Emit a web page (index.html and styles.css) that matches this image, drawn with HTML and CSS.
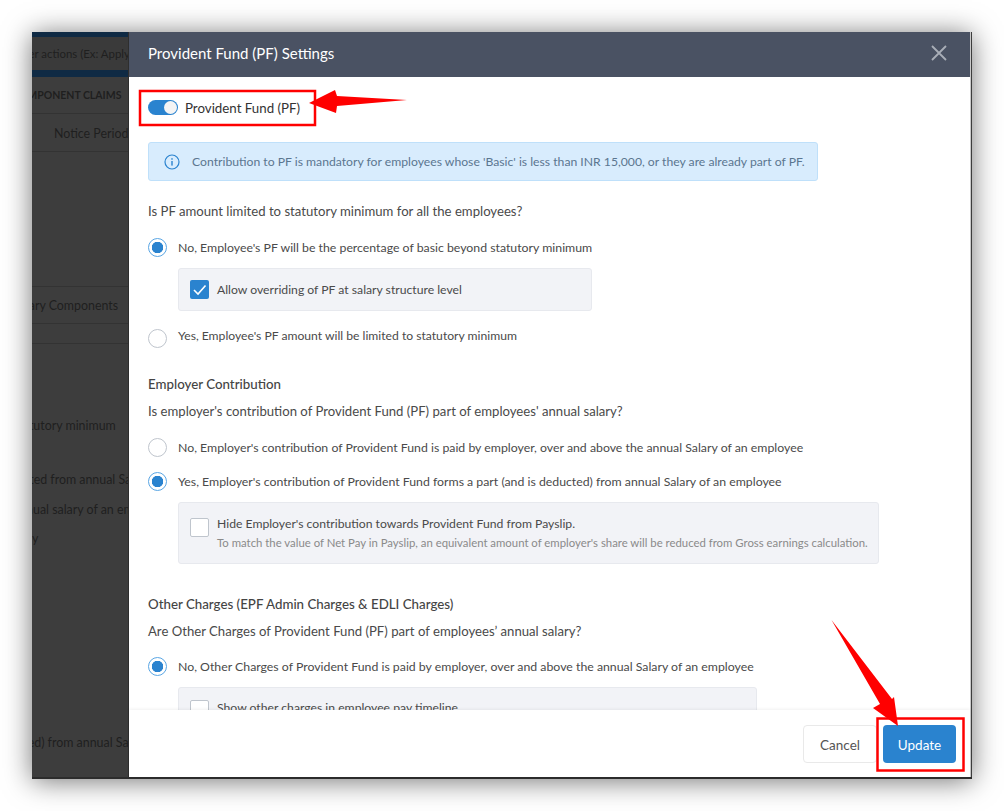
FILE: index.html
```html
<!DOCTYPE html>
<html lang="en">
<head>
    <meta charset="UTF-8">
    <title>Provident Fund (PF) Settings</title>
    <link rel="stylesheet" href="styles.css">
</head>
<body>

<div class="window">
    <div class="backdrop">
        <div class="back-top"><span class="cut-actions">Other actions (Ex: Apply</span></div>
        <div class="back-tab"><span>COMPONENT CLAIMS</span></div>
        <div class="back-notice"><span>Notice Period</span></div>
        <div class="back-line line-a"></div>
        <div class="back-comp"><span>Salary Components</span></div>
        <div class="back-line line-b"></div>
        <p class="back-text t1"><span>statutory minimum</span></p>
        <p class="back-text t2"><span>deducted from annual Salary</span></p>
        <p class="back-text t3"><span>annual salary of an employee</span></p>
        <p class="back-text t4"><span>y</span></p>
        <p class="back-text t5"><span>deducted) from annual Salary</span></p>
    </div>

    <div class="modal">
        <div class="modal-head">
            <h1>Provident Fund (PF) Settings</h1>
            <svg class="close" width="16" height="16" viewBox="0 0 16 16"><path d="M1 1L15 15M15 1L1 15" stroke="#a9aeb7" stroke-width="1.8" fill="none"/></svg>
        </div>

        <div class="modal-body">
            <div class="toggle-row">
                <span class="toggle"><i></i></span>
                <span class="toggle-label">Provident Fund (PF)</span>
            </div>

            <div class="info-box">
                <svg width="16" height="16" viewBox="0 0 16 16"><circle cx="8" cy="8" r="7" fill="none" stroke="#2a83cf" stroke-width="1.2"/><rect x="7.3" y="7" width="1.4" height="4.6" fill="#2a83cf"/><rect x="7.3" y="4.2" width="1.4" height="1.5" fill="#2a83cf"/></svg>
                <span>Contribution to PF is mandatory for employees whose 'Basic' is less than INR 15,000, or they are already part of PF.</span>
            </div>

            <p class="question q-first">Is PF amount limited to statutory minimum for all the employees?</p>

            <div class="radio-row r1"><span class="radio on"></span><span>No, Employee's PF will be the percentage of basic beyond statutory minimum</span></div>
            <div class="sub-box box-a">
                <span class="check on"><svg width="19" height="19" viewBox="0 0 19 19"><path d="M4 10L8 14L15.5 5.5" stroke="#fff" stroke-width="1.6" fill="none"/></svg></span>
                <span class="sub-main">Allow overriding of PF at salary structure level</span>
            </div>
            <div class="radio-row r2"><span class="radio"></span><span class="raised">Yes, Employee's PF amount will be limited to statutory minimum</span></div>

            <h2 class="section s1">Employer Contribution</h2>
            <p class="question">Is employer's contribution of Provident Fund (PF) part of employees' annual salary?</p>

            <div class="radio-row r3"><span class="radio"></span><span>No, Employer's contribution of Provident Fund is paid by employer, over and above the annual Salary of an employee</span></div>
            <div class="radio-row r4"><span class="radio on"></span><span>Yes, Employer's contribution of Provident Fund forms a part (and is deducted) from annual Salary of an employee</span></div>
            <div class="sub-box box-b">
                <span class="check"></span>
                <div>
                    <div class="sub-main">Hide Employer's contribution towards Provident Fund from Payslip.</div>
                    <div class="sub-note">To match the value of Net Pay in Payslip, an equivalent amount of employer's share will be reduced from Gross earnings calculation.</div>
                </div>
            </div>

            <h2 class="section s2">Other Charges (EPF Admin Charges &amp; EDLI Charges)</h2>
            <p class="question">Are Other Charges of Provident Fund (PF) part of employees’ annual salary?</p>

            <div class="radio-row r5"><span class="radio on"></span><span>No, Other Charges of Provident Fund is paid by employer, over and above the annual Salary of an employee</span></div>
            <div class="sub-box box-c">
                <span class="check"></span>
                <span class="sub-main">Show other charges in employee pay timeline</span>
            </div>
        </div>

        <div class="modal-foot">
            <button class="btn-cancel">Cancel</button>
            <button class="btn-update">Update</button>
        </div>
    </div>
</div>

<!-- red annotations drawn on top of the screenshot -->
<svg class="marks" width="1004" height="811" viewBox="0 0 1004 811">
    <rect x="140" y="91" width="175" height="34" fill="none" stroke="#f00" stroke-width="2.5"/>
    <path d="M309 103L335 90L337 96L407 100L337 106L336 113Z" fill="#f00"/>
    <rect x="877.5" y="718.5" width="86" height="52" fill="none" stroke="#f00" stroke-width="2.5"/>
    <path d="M831.5 620L892 699L894 697L898 726L873 708L880 704Z" fill="#f00"/>
</svg>

</body>
</html>
```

FILE: styles.css
```css
* { box-sizing: border-box; }
html, body {
    height: 811px;
    overflow: hidden;
}
body {
    margin: 0;
    padding: 32px 32px 0;
    background: #fff;
    font-family: "Lato", "Liberation Sans", sans-serif;
    font-size: 12.2px;
    color: #4a4a4a;
}
p, h1, h2 { margin: 0; font-weight: normal; }

.window {
    display: flex;
    width: 940px;
    height: 747px;
    background: #3d3d3d;
    border-bottom: 2px solid #2c2c2c;
    box-shadow: 0 2px 26px rgba(0,0,0,0.55);
}

/* dimmed page behind the modal */
.backdrop {
    width: 97px;
    flex-shrink: 0;
    overflow: hidden;
    background: #3d3d3d;
    color: #1f1f1f;
    font-size: 12.4px;
    white-space: nowrap;
    border-right: 1px solid #2e2e2e;
}
.back-top {
    height: 45px;
    background: #3a3a3a;
    border-top: 5px solid #0f2a44;
    border-bottom: 7px solid #0f2a44;
    line-height: 33px;
    font-size: 11.4px;
}
.cut-actions { margin-left: -23px; }
.back-tab {
    height: 37px;
    line-height: 37px;
    font-size: 10.5px;
    font-weight: 700;
    border-bottom: 1px solid #333;
}
.back-tab span { margin-left: -20px; }
.back-notice {
    height: 38px;
    line-height: 40px;
    border-bottom: 1px solid #333;
    padding-left: 22px;
}
.back-line { height: 1px; background: #333; }
.line-a { margin-top: 134px; }
.back-comp {
    height: 37px;
    line-height: 37px;
    border-bottom: 1px solid #333;
}
.back-comp span { margin-left: -19px; }
.line-b { margin-top: 19px; }
.back-text { line-height: 16px; }
.t1 { margin-top: 74px; }
.t1 span { margin-left: -19px; }
.t2 { margin-top: 38px; }
.t2 span { margin-left: -36px; }
.t3 { margin-top: 14px; }
.t3 span { margin-left: -19px; }
.t4 { margin-top: 13px; }
.t5 { margin-top: 188px; }
.t5 span { margin-left: -42px; }

/* modal */
.modal {
    width: 842px;
    display: flex;
    flex-direction: column;
    background: #fff;
    border-right: 1px solid #c9c9c9;
}
.modal-head {
    height: 45px;
    flex-shrink: 0;
    display: flex;
    align-items: center;
    justify-content: space-between;
    padding: 0 23px 3px 19px;
    background: #4a5263;
    color: #fff;
}
.modal-head h1 { font-size: 15px; }
.close { display: block; }

.modal-body {
    flex: 1;
    min-height: 0;
    overflow: hidden;
    padding: 22px 19px 0;
}
.toggle-row {
    display: flex;
    align-items: center;
    gap: 7px;
    height: 16px;
}
.toggle {
    width: 30px;
    height: 15px;
    border-radius: 8px;
    background: #2a83cf;
    display: flex;
    justify-content: flex-end;
    padding: 1px;
}
.toggle i {
    width: 13px;
    height: 13px;
    border-radius: 50%;
    background: #f4f4f4;
}
.toggle-label { font-size: 13.3px; color: #333; padding-top: 2px; }

.info-box {
    display: flex;
    align-items: center;
    gap: 12px;
    width: 670px;
    height: 39px;
    margin-top: 27px;
    padding-left: 15px;
    background: #d8ecfd;
    border: 1px solid #bfe0fa;
    border-radius: 3px;
    color: #5b7690;
}

.question { line-height: 18px; font-size: 13.15px; }
.q-first { margin-top: 21px; }
.radio-row {
    display: flex;
    align-items: center;
    gap: 11px;
    height: 20px;
    font-size: 12.3px;
}
.radio {
    width: 19px;
    height: 19px;
    border-radius: 50%;
    border: 1px solid #bfc5cd;
    background: #fff;
    flex-shrink: 0;
}
.radio.on {
    border-color: #5aa6e4;
    background: radial-gradient(circle, #2a83cf 0 5.5px, #fff 6px);
}
.raised { margin-bottom: 6px; font-size: 12.15px; }
.r1 { margin-top: 17px; }
.r2 { margin-top: 17px; }
.r3 { margin-top: 17px; }
.r4 { margin-top: 14px; }
.r5 { margin-top: 16px; }

.sub-box {
    display: flex;
    gap: 8px;
    margin-left: 30px;
    padding: 12px 11px;
    background: #f2f3f7;
    border: 1px solid #e7e9ee;
    border-radius: 3px;
}
.box-a { width: 414px; height: 43px; margin-top: 11px; align-items: center; }
.box-b { width: 701px; height: 62px; margin-top: 11px; padding-top: 15px; }
.box-c { width: 579px; height: 60px; margin-top: 11px; }
.check {
    width: 19px;
    height: 19px;
    flex-shrink: 0;
    border: 1px solid #bfc5cd;
    border-radius: 2px;
    background: #fff;
}
.check.on { border: 0; background: #2a83cf; }
.check svg { display: block; }
.sub-main { line-height: 16px; }
.box-b .sub-main { margin-top: -2px; }
.sub-note { line-height: 16px; margin-top: 3px; font-size: 11.36px; color: #8a8a8a; white-space: nowrap; }

.section {
    font-size: 13.3px;
    font-weight: 500;
    color: #444;
    line-height: 18px;
}
.section + .question { margin-top: 9px; }
.s1 { margin-top: 27px; }
.s2 { margin-top: 31px; }

.modal-foot {
    height: 67px;
    flex-shrink: 0;
    display: flex;
    justify-content: flex-end;
    gap: 6px;
    padding: 15px 14px 0 0;
    background: #fff;
    box-shadow: 0 -1px 3px rgba(0,0,0,0.06);
    position: relative;
}
button {
    height: 38px;
    padding-top: 3px;
    border-radius: 4px;
    font-family: inherit;
    font-size: 13.5px;
}
.btn-cancel {
    width: 74px;
    background: #fff;
    color: #555;
    border: 1px solid #e9e9e9;
}
.btn-update {
    width: 73px;
    background: #2a83cf;
    color: #fff;
    border: 0;
}

.marks {
    position: absolute;
    left: 0;
    top: 0;
    pointer-events: none;
}
```
